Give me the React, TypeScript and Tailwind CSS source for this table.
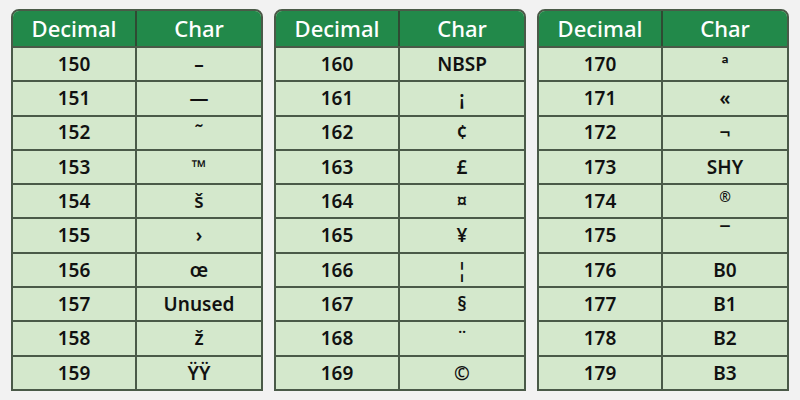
import React from 'react'

const tables = [
  [
    ['150', '–'],
    ['151', '—'],
    ['152', '˜'],
    ['153', '™'],
    ['154', 'š'],
    ['155', '›'],
    ['156', 'œ'],
    ['157', 'Unused'],
    ['158', 'ž'],
    ['159', 'ŸŸ'],
  ],
  [
    ['160', 'NBSP'],
    ['161', '¡'],
    ['162', '¢'],
    ['163', '£'],
    ['164', '¤'],
    ['165', '¥'],
    ['166', '¦'],
    ['167', '§'],
    ['168', '¨'],
    ['169', '©'],
  ],
  [
    ['170', 'ª'],
    ['171', '«'],
    ['172', '¬'],
    ['173', 'SHY'],
    ['174', '®'],
    ['175', '¯'],
    ['176', 'B0'],
    ['177', 'B1'],
    ['178', 'B2'],
    ['179', 'B3'],
  ],
]

function CharTable({ rows }: { rows: string[][] }) {
  return (
    <div className="w-[252px] h-[382px] flex flex-col border-2 border-[#4a5a48] rounded-t-[8px] overflow-hidden bg-[#d4e8cc]">
      {/* Header */}
      <div className="h-[37px] shrink-0 grid grid-cols-2 bg-[#22894a] border-b-2 border-[#4a5a48] text-white text-[22px] font-medium">
        <div className="flex items-center justify-center border-r-2 border-[#2f4a33]">Decimal</div>
        <div className="flex items-center justify-center">Char</div>
      </div>
      {rows.map((r, i) => (
        <div
          key={r[0]}
          className={
            'flex-1 grid grid-cols-2 text-[19px] font-semibold text-[#111] ' +
            (i < rows.length - 1 ? 'border-b-2 border-[#4a5a48]' : '')
          }
        >
          <div className="flex items-center justify-center border-r-2 border-[#4a5a48]">{r[0]}</div>
          <div className="flex items-center justify-center">
            {r[1] === '®' ? <span className="text-[14px] -translate-y-[5px]">{r[1]}</span> : r[1]}
          </div>
        </div>
      ))}
    </div>
  )
}

export default function App() {
  return (
    <div
      className="w-[800px] h-[400px] bg-[#f2f2f2] flex gap-[11px] pt-[9px] pl-[11px]"
      style={{ fontFamily: '"Noto Sans", "Open Sans", sans-serif' }}
    >
      {tables.map((t, i) => (
        <CharTable key={i} rows={t} />
      ))}
    </div>
  )
}
